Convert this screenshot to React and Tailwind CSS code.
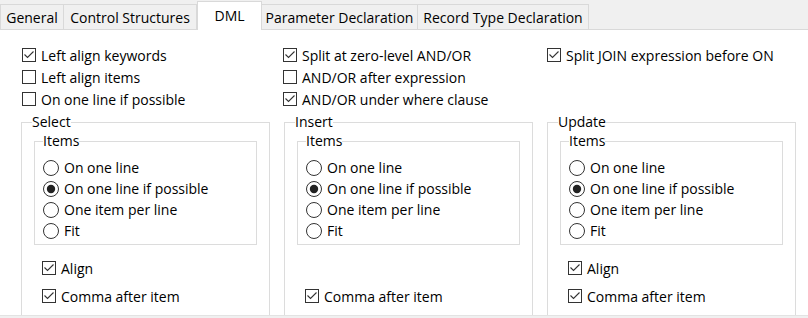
import React from "react";

const tabs = [
  { name: "General", w: "w-[64px]" },
  { name: "Control Structures", w: "w-[134px]" },
  { name: "DML", w: "w-[65px]", active: true },
  { name: "Parameter Declaration", w: "w-[157px]" },
  { name: "Record Type Declaration", w: "w-[172px]" },
];

const CheckBox = ({ checked }) => (
  <svg width="14" height="14" viewBox="0 0 14 14" className="shrink-0">
    <rect x="0.5" y="0.5" width="13" height="13" fill="#fff" stroke="#333" />
    {checked && (
      <path d="M2.5 6.5 L5.5 9.5 L11.5 3.5" fill="none" stroke="#333" strokeWidth="1.1" />
    )}
  </svg>
);

const Radio = ({ checked }) => (
  <svg width="16" height="16" viewBox="0 0 16 16" className="shrink-0">
    <circle cx="8" cy="8" r="7.5" fill="#fff" stroke="#333" />
    {checked && <circle cx="8" cy="8" r="4.2" fill="#222" />}
  </svg>
);

const CheckRow = ({ label, checked }) => (
  <div className="flex h-[22px] items-center gap-[5px] whitespace-nowrap">
    <CheckBox checked={checked} />
    <span>{label}</span>
  </div>
);

const RadioRow = ({ label, checked }) => (
  <div className="flex h-[21px] items-center gap-[5px] whitespace-nowrap">
    <Radio checked={checked} />
    <span>{label}</span>
  </div>
);

const Group = ({ title, align }) => (
  <fieldset className="h-[220px] border border-[#dcdcdc] px-[12px]">
    <legend className="ml-[-2px] px-0 leading-[20px]">{title}</legend>
    <fieldset className="-mt-px border border-[#dcdcdc] pl-[8px] pb-[3px]">
      <legend className="ml-0 px-0 leading-[20px]">Items</legend>
      <div className="pt-[6px]">
        <RadioRow label="On one line" />
        <RadioRow label="On one line if possible" checked />
        <RadioRow label="One item per line" />
        <RadioRow label="Fit" />
      </div>
    </fieldset>
    <div className="mt-[12px] pl-[8px]">
      {align ? <CheckRow label="Align" checked /> : <div className="h-[22px]" />}
      <div className="mt-[6px]">
        <CheckRow label="Comma after item" checked />
      </div>
    </div>
  </fieldset>
);

export default function App() {
  return (
    <div
      className="flex h-[318px] w-[808px] flex-col overflow-hidden bg-white text-[14px] text-black"
      style={{ fontFamily: '"Open Sans", "Noto Sans", sans-serif' }}
    >
      {/* Tabs */}
      <div className="flex h-[30px] shrink-0 items-end border-b border-[#d9d9d9] bg-[#f0f0f0]">
        {tabs.map((t) =>
          t.active ? (
            <div
              key={t.name}
              className={`${t.w} -mb-px flex h-[29px] items-start justify-center border border-b-0 border-[#d9d9d9] bg-white pt-[3px]`}
            >
              {t.name}
            </div>
          ) : (
            <div
              key={t.name}
              className={`${t.w} -ml-px flex h-[25px] items-center justify-center border border-b-0 border-[#d9d9d9] bg-[#f0f0f0] first:ml-0`}
            >
              {t.name}
            </div>
          )
        )}
      </div>

      {/* Page */}
      <div className="min-h-0 flex-1 overflow-hidden pl-[21px] pt-[14px]">
        <div className="grid grid-cols-[249px_249px_249px] gap-x-[14px]">
          <div className="pl-px">
            <CheckRow label="Left align keywords" checked />
            <CheckRow label="Left align items" />
            <CheckRow label="On one line if possible" />
          </div>
          <div className="-ml-px">
            <CheckRow label="Split at zero-level AND/OR" checked />
            <CheckRow label="AND/OR after expression" />
            <CheckRow label="AND/OR under where clause" checked />
          </div>
          <div>
            <CheckRow label="Split JOIN expression before ON" checked />
          </div>
        </div>
        <div className="mt-[2px] grid grid-cols-[249px_249px_249px] gap-x-[14px]">
          <Group title="Select" align />
          <Group title="Insert" />
          <Group title="Update" align />
        </div>
      </div>
      <div className="h-[3px] shrink-0 border-t border-[#e3e3e3] bg-[#f0f0f0]" />
    </div>
  );
}
